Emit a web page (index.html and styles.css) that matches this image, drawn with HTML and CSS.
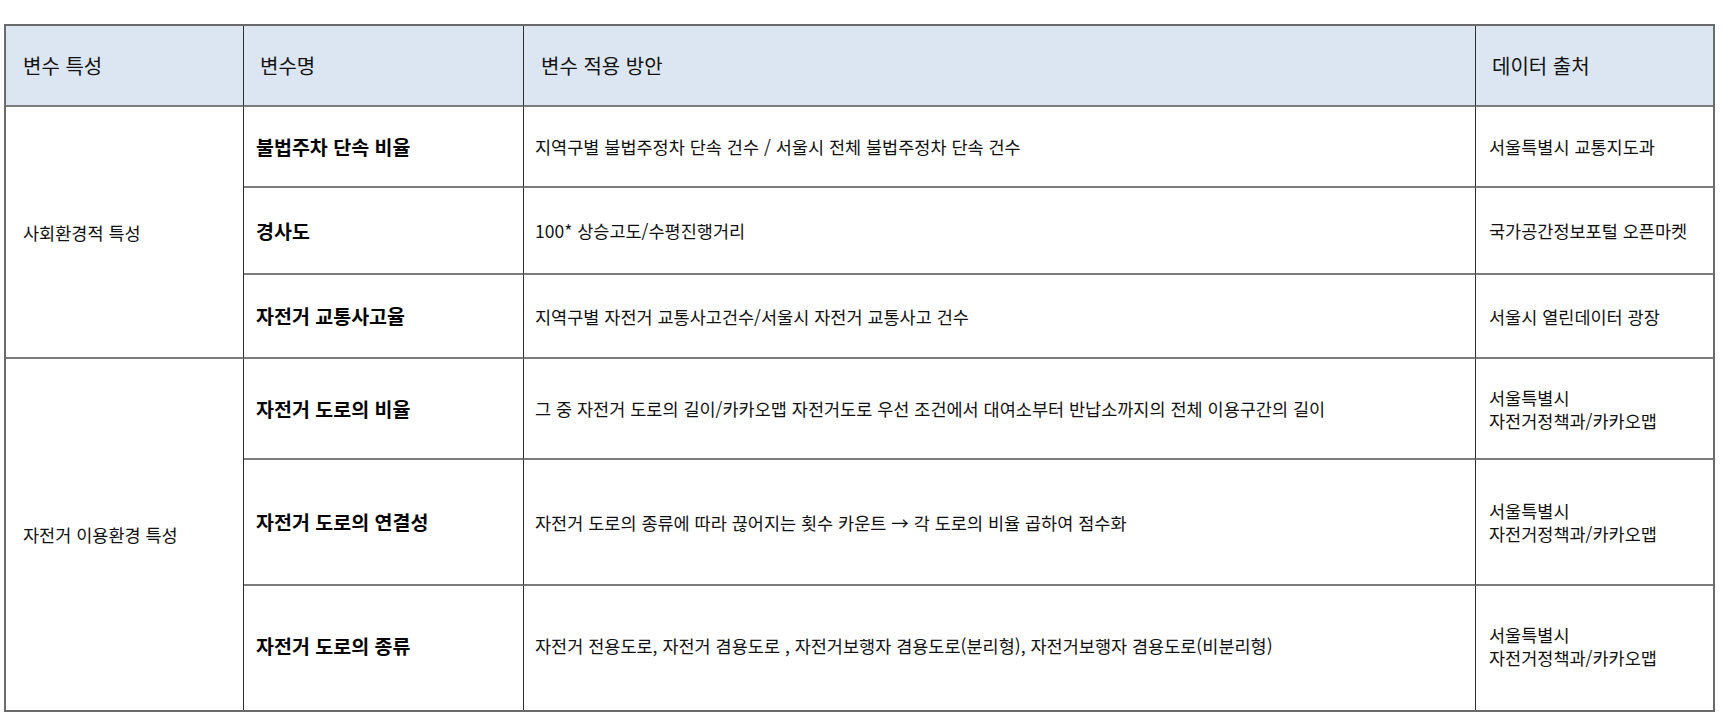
FILE: index.html
```html
<!DOCTYPE html>
<html lang="ko">
<head>
<meta charset="utf-8">
<title>변수 표</title>
<link rel="stylesheet" href="styles.css">
</head>
<body>
<table class="vars">
  <colgroup>
    <col class="c1">
    <col class="c2">
    <col class="c3">
    <col class="c4">
  </colgroup>
  <thead>
    <tr class="r-head">
      <th class="p1">변수 특성</th>
      <th class="p2">변수명</th>
      <th class="p3">변수 적용 방안</th>
      <th class="p4 last-col">데이터 출처</th>
    </tr>
  </thead>
  <tbody>
    <tr class="r1">
      <td class="group" rowspan="3">사회환경적 특성</td>
      <td class="name">불법주차 단속 비율</td>
      <td class="method">지역구별 불법주정차 단속 건수 / 서울시 전체 불법주정차 단속 건수</td>
      <td class="source last-col">서울특별시 교통지도과</td>
    </tr>
    <tr class="r2">
      <td class="name">경사도</td>
      <td class="method">100* 상승고도/수평진행거리</td>
      <td class="source last-col">국가공간정보포털 오픈마켓</td>
    </tr>
    <tr class="r3">
      <td class="name">자전거 교통사고율</td>
      <td class="method">지역구별 자전거 교통사고건수/서울시 자전거 교통사고 건수</td>
      <td class="source last-col">서울시 열린데이터 광장</td>
    </tr>
    <tr class="r4">
      <td class="group last-row" rowspan="3">자전거 이용환경 특성</td>
      <td class="name">자전거 도로의 비율</td>
      <td class="method">그 중 자전거 도로의 길이/카카오맵 자전거도로 우선 조건에서 대여소부터 반납소까지의 전체 이용구간의 길이</td>
      <td class="source last-col">서울특별시<br>자전거정책과/카카오맵</td>
    </tr>
    <tr class="r5">
      <td class="name">자전거 도로의 연결성</td>
      <td class="method">자전거 도로의 종류에 따라 끊어지는 횟수 카운트 → 각 도로의 비율 곱하여 점수화</td>
      <td class="source last-col">서울특별시<br>자전거정책과/카카오맵</td>
    </tr>
    <tr class="r6">
      <td class="name last-row">자전거 도로의 종류</td>
      <td class="method last-row">자전거 전용도로, 자전거 겸용도로 , 자전거보행자 겸용도로(분리형), 자전거보행자 겸용도로(비분리형)</td>
      <td class="source last-col last-row">서울특별시<br>자전거정책과/카카오맵</td>
    </tr>
  </tbody>
</table>
</body>
</html>
```

FILE: styles.css
```css
html, body {
  margin: 0;
  padding: 0;
  background: #ffffff;
}

body {
  padding: 24px 0 0 4px;
  font-family: "Noto Sans CJK KR", "Noto Sans", sans-serif;
  color: #111111;
}

.vars {
  border-collapse: separate;
  border-spacing: 0;
  table-layout: fixed;
  width: 1711px;
  border: 2px solid #6a6a6a;
}

.c1 { width: 238px; }
.c2 { width: 280px; }
.c3 { width: 952px; }
.c4 { width: 237px; }

.vars th,
.vars td {
  box-sizing: border-box;
  border-right: 1px solid #2e2e2e;
  border-bottom: 2px solid #7c7c7c;
  vertical-align: middle;
  text-align: left;
  padding: 0;
}

.vars .last-col { border-right: none; }
.vars .last-row { border-bottom: none; }

.vars th {
  background: #dce6f2;
  font-weight: 400;
  font-size: 20px;
  line-height: 26px;
  color: #111111;
}

.p1 { padding-left: 17px !important; }
.p2 { padding-left: 16px !important; }
.p3 { padding-left: 17px !important; }
.p4 { padding-left: 16px !important; }

.r-head { height: 81px; }
.r1 { height: 81px; }
.r2 { height: 87px; }
.r3 { height: 84px; }
.r4 { height: 101px; }
.r5 { height: 126px; }
.r6 { height: 124px; }

.r6 td { padding-bottom: 5px; }

.group {
  font-size: 17.5px;
  line-height: 23px;
  padding-left: 17px !important;
}

.name {
  font-size: 19.5px;
  font-weight: 700;
  line-height: 26px;
  padding-left: 12px !important;
  color: #050505;
}

.method {
  font-size: 17.5px;
  line-height: 23px;
  padding-left: 11px !important;
}

.source {
  font-size: 17.5px;
  line-height: 23px;
  padding-left: 13px !important;
}
```
